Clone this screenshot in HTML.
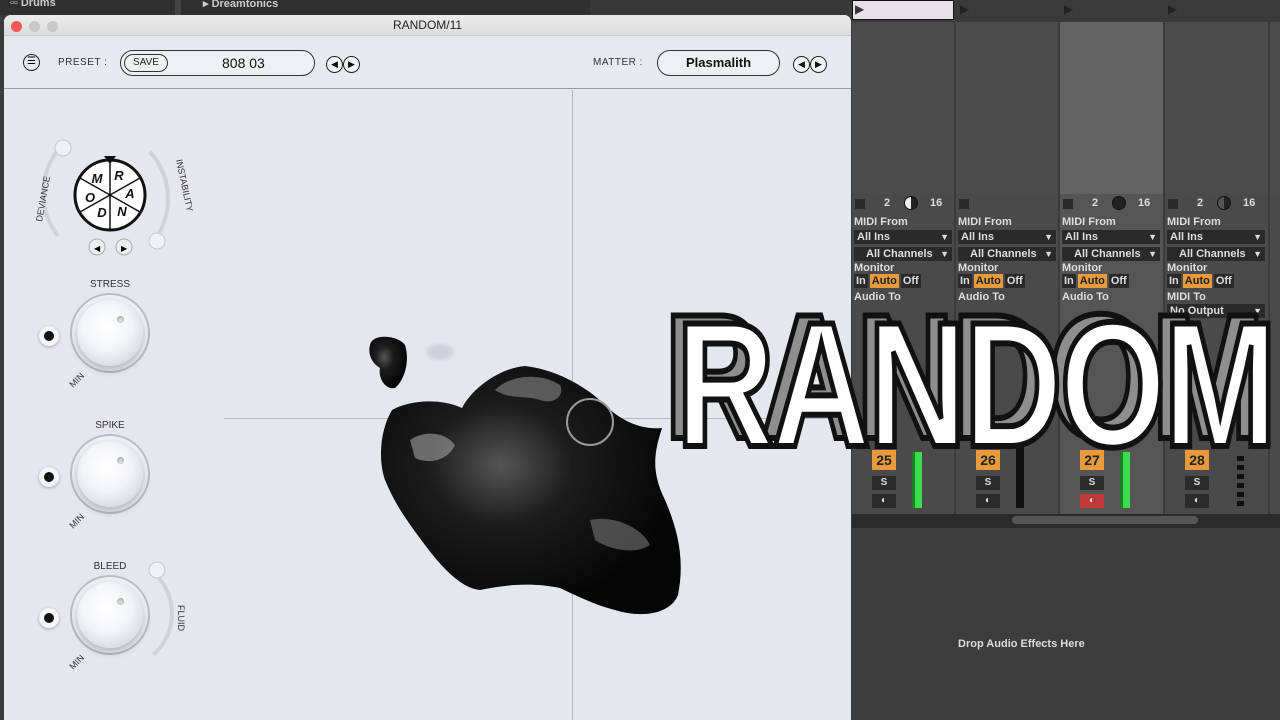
<!DOCTYPE html>
<html><head><meta charset="utf-8"><style>
*{margin:0;padding:0;box-sizing:border-box}
body{width:1280px;height:720px;overflow:hidden;background:#3b3b3b;font-family:"Liberation Sans",sans-serif;position:relative}
.abs{position:absolute}
.col{position:absolute;top:22px;height:172px;background:#4c4c4c}
.hdr{position:absolute;top:0;height:20px;background:#3a3a3a}
.strip{position:absolute;top:194px;height:320px;background:#4a4a4a;color:#ddd;font-size:11px;font-weight:bold}
.strip .t{position:absolute;left:2px}
.dd{position:absolute;left:2px;width:98px;height:14px;background:#2a2a2a;color:#ddd;font-size:11px;padding-left:3px;line-height:14px}
.dd:after{content:"▼";position:absolute;right:3px;font-size:9px}
.mon{position:absolute;top:80px;left:2px;font-size:11px}
.mon span{display:inline-block;background:#2a2a2a;padding:0 2px;margin-right:2px;line-height:14px}
.mon span.a{background:#e89a3c;color:#222}
.num{position:absolute;top:256px;left:20px;width:24px;height:20px;background:#e89a3c;color:#222;font-size:14px;text-align:center;line-height:20px}
.sb{position:absolute;left:20px;width:24px;height:14px;background:#2c2c2c;color:#ddd;font-size:10px;text-align:center;line-height:14px}
.lbl{font-size:10px;color:#333;letter-spacing:.5px}
.knob{position:absolute;width:66px;height:66px;border-radius:50%;background:radial-gradient(circle at 45% 40%,#fff 0,#f3f4f7 45%,#d5d8df 80%,#bfc3cb 100%);box-shadow:0 4px 8px rgba(0,0,0,.25),0 0 0 5px #eef0f4,0 0 0 7px #b9bcc4}
.knob:after{content:"";position:absolute;left:40px;top:16px;width:7px;height:7px;border-radius:50%;background:#d6d8de;box-shadow:inset 0 1px 2px rgba(0,0,0,.3)}
.jack{position:absolute;left:39px;width:20px;height:20px;border-radius:50%;background:#f4f5f8;box-shadow:0 1px 3px rgba(0,0,0,.3)}
.jack:after{content:"";position:absolute;left:5px;top:5px;width:10px;height:10px;border-radius:50%;background:#111}
.arr{display:inline-block;width:17px;height:17px;border-radius:50%;border:1.5px solid #222;font-size:9px;text-align:center;line-height:14px;color:#111;background:#f2f3f6}
.rt{position:absolute;font-weight:bold;font-size:178px;line-height:1;transform:scaleX(.77);transform-origin:left top;-webkit-text-stroke:6px #111;letter-spacing:-4px;white-space:nowrap}
</style></head><body>
<div class="abs" style="left:0;top:0;width:850px;height:15px;background:#2f2f2f"></div>
<div class="abs" style="left:10px;top:-3px;color:#ccc;font-size:11px;font-weight:bold">▫▫ Drums</div>
<div class="abs" style="left:175px;top:0;width:6px;height:15px;background:#444"></div>
<div class="abs" style="left:203px;top:-3px;color:#ccc;font-size:11px;font-weight:bold">▸ Dreamtonics</div>
<div class="abs" style="left:590px;top:0;width:260px;height:15px;background:#383838"></div>

<div class="hdr" style="left:852px;width:102px;background:#e8e0e6;border:1px solid #111"></div>
<div class="abs" style="left:855px;top:2px;font-size:12px;color:#333">▶</div>
<div class="hdr" style="left:956px;width:102px"></div><div class="abs" style="left:960px;top:2px;font-size:12px;color:#222">▶</div>
<div class="hdr" style="left:1060px;width:103px"></div><div class="abs" style="left:1064px;top:2px;font-size:12px;color:#222">▶</div>
<div class="hdr" style="left:1165px;width:103px"></div><div class="abs" style="left:1168px;top:2px;font-size:12px;color:#222">▶</div>
<div class="hdr" style="left:1270px;width:10px"></div>
<div class="col" style="left:852px;width:102px"></div>
<div class="col" style="left:956px;width:102px"></div>
<div class="col" style="left:1060px;width:103px;background:#636363"></div>
<div class="col" style="left:1165px;width:103px"></div>
<div class="col" style="left:1270px;width:10px"></div>

<div class="strip" style="left:852px;width:102px">
<div class="abs" style="left:3px;top:5px;width:10px;height:10px;background:#2a2a2a"></div>
<div class="abs" style="left:32px;top:3px">2</div><div class="abs" style="left:52px;top:2px;width:14px;height:14px;border-radius:50%;background:linear-gradient(90deg,#eee 50%,#222 50%);border:1px solid #111"></div><div class="abs" style="left:78px;top:3px">16</div>
<div class="t" style="top:22px">MIDI From</div><div class="dd" style="top:36px">All Ins</div><div class="dd" style="top:53px;padding-left:12px">All Channels</div>
<div class="t" style="top:68px">Monitor</div><div class="mon"><span>In</span><span class="a">Auto</span><span>Off</span></div>
<div class="t" style="top:97px">Audio To</div>
<div class="num">25</div><div class="sb" style="top:282px">S</div><div class="sb" style="top:300px">◐</div>
<div class="abs" style="left:60px;top:258px;width:10px;height:56px;background:#3ddc4a;border-left:3px solid #1f7f28"></div>
</div>
<div class="strip" style="left:956px;width:102px">
<div class="abs" style="left:3px;top:5px;width:10px;height:10px;background:#2a2a2a"></div>
<div class="t" style="top:22px">MIDI From</div><div class="dd" style="top:36px">All Ins</div><div class="dd" style="top:53px;padding-left:12px">All Channels</div>
<div class="t" style="top:68px">Monitor</div><div class="mon"><span>In</span><span class="a">Auto</span><span>Off</span></div>
<div class="t" style="top:97px">Audio To</div>
<div class="num">26</div><div class="sb" style="top:282px">S</div><div class="sb" style="top:300px">◐</div>
<div class="abs" style="left:60px;top:250px;width:8px;height:64px;background:#111"></div>
</div>
<div class="strip" style="left:1060px;width:103px;background:#555">
<div class="abs" style="left:3px;top:5px;width:10px;height:10px;background:#2a2a2a"></div>
<div class="abs" style="left:32px;top:3px">2</div><div class="abs" style="left:52px;top:2px;width:14px;height:14px;border-radius:50%;background:#222;border:1px solid #111"></div><div class="abs" style="left:78px;top:3px">16</div>
<div class="t" style="top:22px">MIDI From</div><div class="dd" style="top:36px">All Ins</div><div class="dd" style="top:53px;padding-left:12px">All Channels</div>
<div class="t" style="top:68px">Monitor</div><div class="mon"><span>In</span><span class="a">Auto</span><span>Off</span></div>
<div class="t" style="top:97px">Audio To</div>
<div class="num">27</div><div class="sb" style="top:282px">S</div><div class="sb" style="top:300px;background:#c0393b">◐</div>
<div class="abs" style="left:60px;top:258px;width:10px;height:56px;background:#3ddc4a;border-left:3px solid #1f7f28"></div>
</div>
<div class="strip" style="left:1165px;width:103px">
<div class="abs" style="left:3px;top:5px;width:10px;height:10px;background:#2a2a2a"></div>
<div class="abs" style="left:32px;top:3px">2</div><div class="abs" style="left:52px;top:2px;width:14px;height:14px;border-radius:50%;background:linear-gradient(90deg,#555 50%,#222 50%);border:1px solid #111"></div><div class="abs" style="left:78px;top:3px">16</div>
<div class="t" style="top:22px">MIDI From</div><div class="dd" style="top:36px">All Ins</div><div class="dd" style="top:53px;padding-left:12px">All Channels</div>
<div class="t" style="top:68px">Monitor</div><div class="mon"><span>In</span><span class="a">Auto</span><span>Off</span></div>
<div class="t" style="top:97px">MIDI To</div><div class="dd" style="top:110px">No Output</div>
<div class="num">28</div><div class="sb" style="top:282px">S</div><div class="sb" style="top:300px">◐</div>
<div class="abs" style="left:72px;top:262px;width:7px;height:52px;background:repeating-linear-gradient(#111 0 5px,transparent 5px 9px)"></div>
</div>
<div class="strip" style="left:1270px;width:10px"></div>
<div class="abs" style="left:852px;top:514px;width:428px;height:14px;background:#2b2b2b"></div>
<div class="abs" style="left:1012px;top:516px;width:186px;height:8px;border-radius:4px;background:#555"></div>
<div class="abs" style="left:852px;top:528px;width:428px;height:192px;background:#3d3d3d"></div>
<div class="abs" style="left:958px;top:638px;color:#ddd;font-size:11px;font-weight:bold">Drop Audio Effects Here</div>

<div class="abs" style="left:4px;top:15px;width:847px;height:705px;background:#e4e7ee;border-radius:7px 7px 0 0;overflow:hidden">
 <div class="abs" style="left:0;top:0;width:847px;height:21px;background:linear-gradient(#ececec,#dcdcdc);border-bottom:1px solid #c8c8c8;text-align:center;font-size:12px;line-height:21px;color:#222">RANDOM/11</div>
 <div class="abs" style="left:7px;top:6px;width:11px;height:11px;border-radius:50%;background:#ee5b55"></div>
 <div class="abs" style="left:25px;top:6px;width:11px;height:11px;border-radius:50%;background:#c8c8c8"></div>
 <div class="abs" style="left:43px;top:6px;width:11px;height:11px;border-radius:50%;background:#c8c8c8"></div>
 <div class="abs" style="left:0;top:22px;width:847px;height:52px;background:#e6e9ef;border-bottom:1px solid #9a9da4"></div>
 <div class="abs" style="left:19px;top:39px;width:17px;height:17px;border-radius:50%;border:1.5px solid #222;font-size:10px;text-align:center;line-height:14px">☰</div>
 <div class="abs lbl" style="left:54px;top:42px">PRESET :</div>
 <div class="abs" style="left:116px;top:35px;width:195px;height:26px;border:1.5px solid #333;border-radius:13px;background:#eef0f4"></div>
 <div class="abs" style="left:120px;top:39px;width:44px;height:18px;border:1.5px solid #333;border-radius:9px;font-size:10px;text-align:center;line-height:15px;color:#222">SAVE</div>
 <div class="abs" style="left:218px;top:40px;font-size:14px;color:#111">808 03</div>
 <div class="abs" style="left:322px;top:39px"><span class="arr">◀</span><span class="arr">▶</span></div>
 <div class="abs lbl" style="left:589px;top:42px">MATTER :</div>
 <div class="abs" style="left:653px;top:35px;width:123px;height:26px;border:1.5px solid #333;border-radius:13px;background:#eef0f4;text-align:center;font-size:13px;line-height:23px;font-weight:bold;color:#111">Plasmalith</div>
 <div class="abs" style="left:789px;top:39px"><span class="arr">◀</span><span class="arr">▶</span></div>
 <div class="abs" style="left:568px;top:75px;width:1px;height:630px;background:#b4b7be"></div>
 <div class="abs" style="left:220px;top:403px;width:627px;height:1px;background:#b4b7be"></div>
</div>

<svg class="abs" style="left:0;top:0" width="220" height="720">
 <path d="M58 150 A70 70 0 0 0 58 236" stroke="#cfd2d8" stroke-width="4" fill="none"/>
 <path d="M150 152 A70 70 0 0 1 156 238" stroke="#cfd2d8" stroke-width="4" fill="none"/>
 <circle cx="110" cy="195" r="35" fill="#fff" stroke="#111" stroke-width="3"/>
 <g stroke="#111" stroke-width="1.5"><line x1="110" y1="160" x2="110" y2="230"/><line x1="80" y1="178" x2="140" y2="212"/><line x1="80" y1="212" x2="140" y2="178"/></g>
 <path d="M104 156 L116 156 L110 164 Z" fill="#111"/>
 <g font-family="Liberation Sans" font-weight="bold" font-style="italic" font-size="13" fill="#111" text-anchor="middle"><text x="97" y="183">M</text><text x="119" y="180">R</text><text x="130" y="198">A</text><text x="122" y="216">N</text><text x="102" y="217">D</text><text x="90" y="202">O</text></g>
 <text x="42" y="222" font-size="9" fill="#333" transform="rotate(-80 42 222)" font-family="Liberation Sans">DEVIANCE</text>
 <text x="176" y="160" font-size="9" fill="#333" transform="rotate(78 176 160)" font-family="Liberation Sans">INSTABILITY</text>
 <circle cx="63" cy="148" r="8" fill="#f0f1f4" stroke="#c4c7ce"/><circle cx="157" cy="241" r="8" fill="#f0f1f4" stroke="#c4c7ce"/>
 <circle cx="97" cy="247" r="8" fill="#eceef2" stroke="#aaa"/><text x="94" y="251" font-size="8">◀</text>
 <circle cx="124" cy="247" r="8" fill="#eceef2" stroke="#aaa"/><text x="121" y="251" font-size="8">▶</text>
 <g font-family="Liberation Sans" font-size="10" fill="#333" text-anchor="middle"><text x="110" y="287">STRESS</text><text x="110" y="428">SPIKE</text><text x="110" y="569">BLEED</text></g>
 <g font-family="Liberation Sans" font-size="9" fill="#333"><text x="73" y="388" transform="rotate(-45 73 388)">MIN</text><text x="73" y="529" transform="rotate(-45 73 529)">MIN</text><text x="73" y="670" transform="rotate(-45 73 670)">MIN</text></g>
 <path d="M153 572 A55 55 0 0 1 153 655" stroke="#cfd2d8" stroke-width="4" fill="none"/>
 <circle cx="157" cy="570" r="8" fill="#f0f1f4" stroke="#c4c7ce"/>
 <text x="178" y="605" font-size="9" fill="#333" transform="rotate(90 178 605)" font-family="Liberation Sans">FLUID</text>
</svg>
<div class="knob" style="left:77px;top:300px"></div>
<div class="knob" style="left:77px;top:441px"></div>
<div class="knob" style="left:77px;top:582px"></div>
<div class="jack" style="top:326px"></div><div class="jack" style="top:467px"></div><div class="jack" style="top:608px"></div>

<svg class="abs" style="left:0;top:0" width="850" height="720">
 <defs><radialGradient id="g" cx="40%" cy="40%" r="60%"><stop offset="0" stop-color="#555"/><stop offset=".4" stop-color="#1c1c1c"/><stop offset="1" stop-color="#050505"/></radialGradient>
 <filter id="s"><feGaussianBlur stdDeviation="2"/></filter></defs>
 <ellipse cx="440" cy="352" rx="14" ry="8" fill="#ccd0d8" filter="url(#s)"/>
 <path d="M370 345 C372 333 398 335 405 345 C410 360 405 380 395 388 C385 390 378 378 380 368 C370 362 368 352 370 345Z" fill="url(#g)"/>
 <path d="M392 410 C410 400 440 398 462 408 C472 388 500 368 525 366 C560 370 590 390 605 405 C620 420 640 430 662 428 C655 450 650 470 665 500 C678 530 685 560 678 595 C670 615 640 618 615 610 C595 605 575 595 560 588 C530 582 505 585 480 590 C460 588 440 565 425 545 C410 525 395 505 385 480 C378 460 380 430 392 410Z" fill="url(#g)"/>
 <path d="M495 390 C510 375 540 372 560 385 C565 395 555 405 540 400 C525 395 510 400 495 390Z" fill="#888" opacity=".6"/>
 <path d="M410 440 C425 430 445 432 455 445 C448 460 430 465 415 458Z" fill="#bbb" opacity=".5"/>
 <path d="M590 520 C610 515 640 525 650 545 C635 555 610 550 595 540Z" fill="#777" opacity=".6"/>
 <circle cx="590" cy="422" r="23" fill="none" stroke="#999" stroke-width="2"/>
</svg>

<div class="rt" style="left:664px;top:288px;color:#8e8e8e">RANDOM</div>
<div class="rt" style="left:676px;top:296px;color:#fff">RANDOM</div>
</body></html>
